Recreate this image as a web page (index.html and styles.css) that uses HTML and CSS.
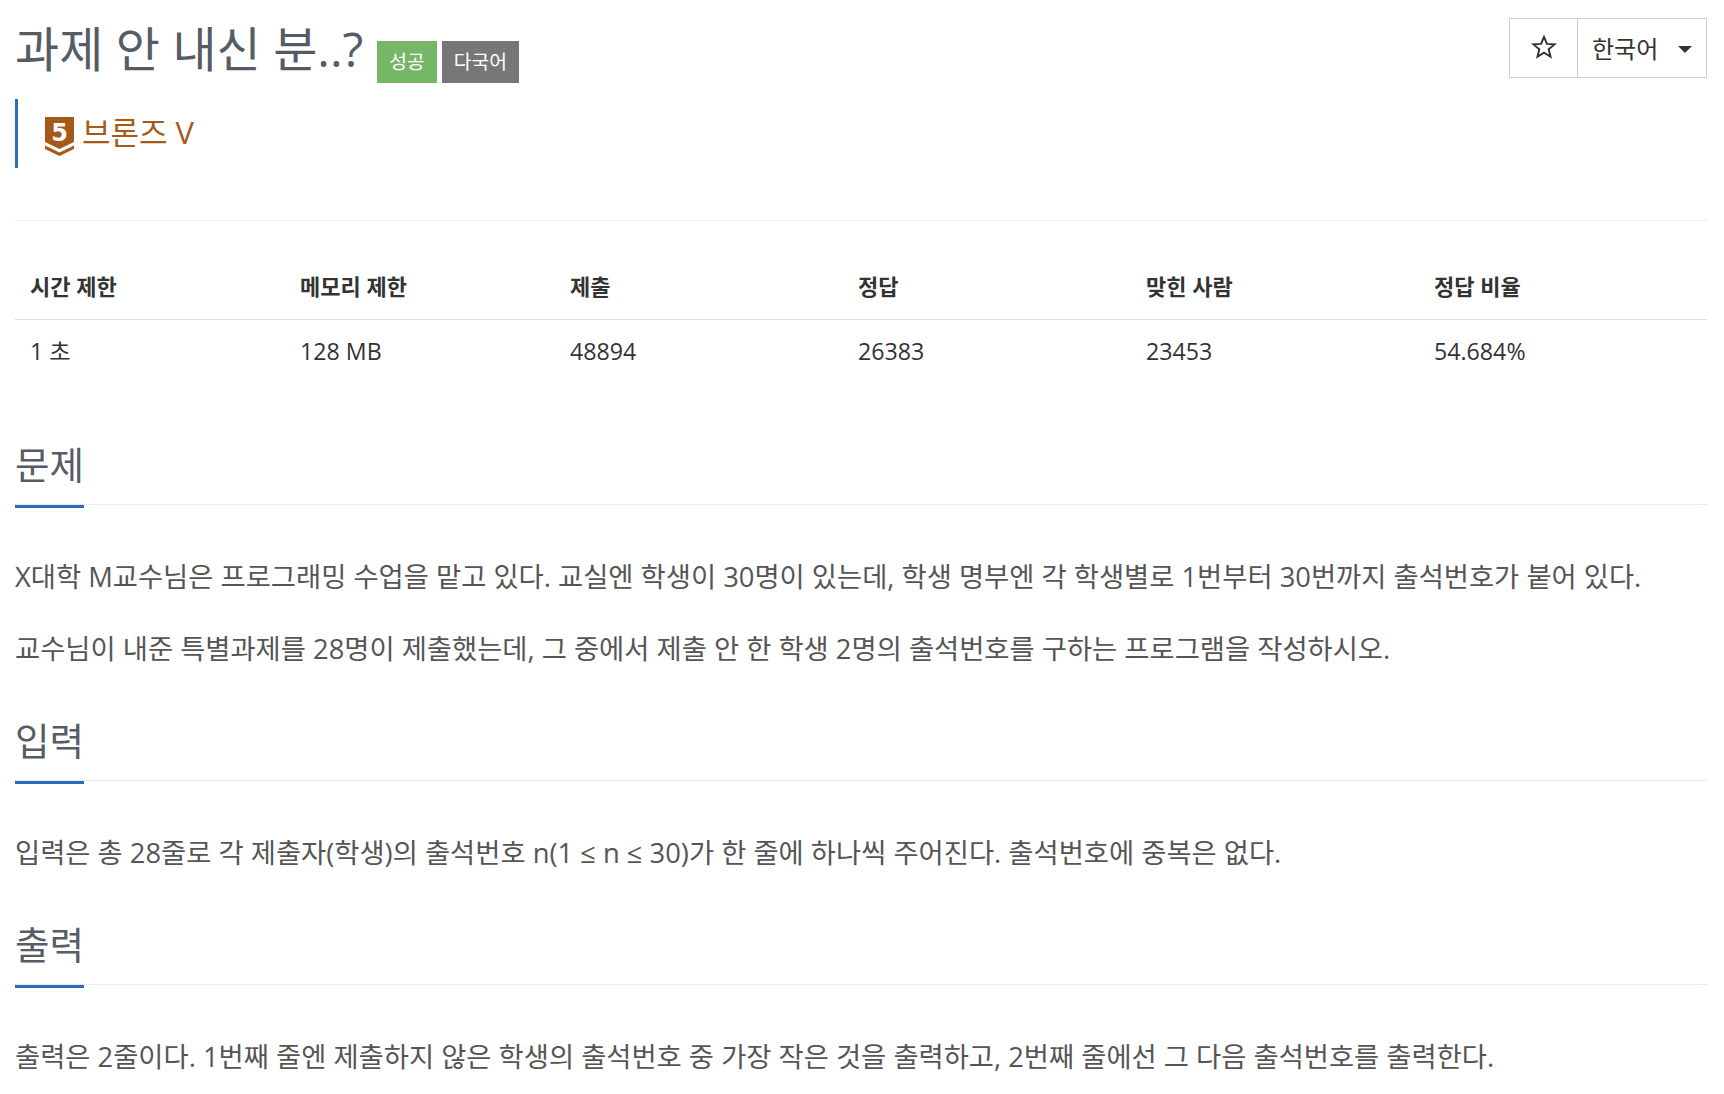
FILE: index.html
```html
<!DOCTYPE html>
<html lang="ko">
<head>
    <meta charset="UTF-8">
    <title>과제 안 내신 분..?</title>
    <link rel="stylesheet" href="styles.css">
</head>
<body>
    <div class="page-header">
        <div class="title-row">
            <h1 class="problem-title">과제 안 내신 분..?</h1>
            <span class="label label-success">성공</span>
            <span class="label label-default">다국어</span>
        </div>
        <div class="page-tools">
            <button class="tool-star" aria-label="즐겨찾기">
                <svg width="26" height="26" viewBox="0 0 24 24"><path d="M12 2.6l2.7 6.5 7 .5-5.4 4.5 1.7 6.9-6-3.7-6 3.7 1.7-6.9-5.4-4.5 7-.5z" fill="none" stroke="#333" stroke-width="1.8"/></svg>
            </button>
            <button class="tool-lang">한국어<span class="caret"></span></button>
        </div>
    </div>
    <blockquote class="tier">
        <svg class="tier-icon" width="29" height="39" viewBox="0 0 29 39">
            <path d="M0 0H29V25L14.5 32 0 25z" fill="#a65a1a"/>
            <path d="M0 28.5L14.5 35.5 29 28.5V32L14.5 39 0 32z" fill="#a65a1a"/>
            <text x="14.5" y="24" class="tier-num">5</text>
        </svg>
        <span class="tier-name">브론즈 V</span>
    </blockquote>

    <table class="info">
        <thead>
            <tr>
                <th class="col-a">시간 제한</th>
                <th class="col-a">메모리 제한</th>
                <th class="col-b">제출</th>
                <th class="col-b">정답</th>
                <th class="col-b">맞힌 사람</th>
                <th>정답 비율</th>
            </tr>
        </thead>
        <tbody>
            <tr>
                <td>1 초</td>
                <td>128 MB</td>
                <td>48894</td>
                <td>26383</td>
                <td>23453</td>
                <td>54.684%</td>
            </tr>
        </tbody>
    </table>

    <section class="problem-section">
        <div class="headline"><h2>문제</h2></div>
        <p>X대학 M교수님은 프로그래밍 수업을 맡고 있다. 교실엔 학생이 30명이 있는데, 학생 명부엔 각 학생별로 1번부터 30번까지 출석번호가 붙어 있다.</p>
        <p>교수님이 내준 특별과제를 28명이 제출했는데, 그 중에서 제출 안 한 학생 2명의 출석번호를 구하는 프로그램을 작성하시오.</p>
    </section>
    <section class="problem-section">
        <div class="headline"><h2>입력</h2></div>
        <p>입력은 총 28줄로 각 제출자(학생)의 출석번호 n(1 ≤ n ≤ 30)가 한 줄에 하나씩 주어진다. 출석번호에 중복은 없다.</p>
    </section>
    <section class="problem-section">
        <div class="headline"><h2>출력</h2></div>
        <p>출력은 2줄이다. 1번째 줄엔 제출하지 않은 학생의 출석번호 중 가장 작은 것을 출력하고, 2번째 줄에선 그 다음 출석번호를 출력한다.</p>
    </section>
</body>
</html>
```

FILE: styles.css
```css
html, body {
    overflow: hidden;
}

body {
    margin: 0;
    padding: 0 17px 0 15px;
    height: 1094px;
    box-sizing: border-box;
    background-color: #fff;
    font-family: "Open Sans", "Noto Sans CJK KR", sans-serif;
    color: #333;
}

.page-header {
    display: flex;
    justify-content: space-between;
    align-items: flex-start;
    height: 99px;
    padding-top: 18px;
    box-sizing: border-box;
}

.title-row {
    display: flex;
    align-items: flex-start;
}

.problem-title {
    margin: 0 14px 0 0;
    font-size: 48px;
    font-weight: 400;
    line-height: 62px;
    color: #555c66;
}

.label {
    height: 42px;
    margin: 23px 5px 0 0;
    padding: 0 12px;
    font-size: 19.3px;
    line-height: 42px;
    color: #fff;
}

.label-success {
    background-color: #75b766;
}

.label-default {
    background-color: #777;
}

.page-tools {
    display: flex;
    height: 60px;
    border: 1px solid #ccc;
    box-sizing: border-box;
}

.page-tools button {
    background: none;
    border: none;
    padding: 0;
    font-family: inherit;
    font-size: 24px;
    color: #333;
}

.tool-star {
    display: flex;
    align-items: center;
    justify-content: center;
    width: 68px;
    padding-bottom: 2px !important;
    border-right: 1px solid #ccc !important;
}

.tool-lang {
    display: flex;
    align-items: center;
    width: 128px;
    padding-left: 14px !important;
    padding-bottom: 2px !important;
}

.caret {
    margin-left: 20px;
    margin-top: 5px;
    border-top: 7px solid #333;
    border-left: 7px solid transparent;
    border-right: 7px solid transparent;
}

.tier {
    display: flex;
    align-items: flex-start;
    margin: 0;
    height: 69px;
    padding: 18px 0 0 27px;
    border-left: 3px solid #2a6ebb;
    box-sizing: border-box;
}

.tier-num {
    font-family: "DejaVu Sans", sans-serif;
    font-size: 24px;
    font-weight: 700;
    fill: #fff;
    text-anchor: middle;
}

.tier-name {
    margin: -7px 0 0 8px;
    font-size: 31px;
    line-height: 44px;
    color: #a65a1a;
}

.info {
    width: 100%;
    margin-top: 52px;
    margin-bottom: 55px;
    border-top: 1px solid #eee;
    border-collapse: collapse;
    table-layout: fixed;
    font-size: 23.2px;
}

.info th {
    padding: 50px 15px 18px;
    box-sizing: border-box;
    text-align: left;
    font-size: 22px;
    line-height: 30px;
    font-weight: 700;
    border-bottom: 1px solid #ddd;
}

.col-a {
    width: 270px;
}

.col-b {
    width: 288px;
}

.info td {
    padding: 11px 15px 13px;
    line-height: 40px;
}

.problem-section {
    margin-top: 45px;
}

.headline {
    height: 66px;
    margin-bottom: 21px;
    border-bottom: 1px dotted #dde;
    box-sizing: border-box;
}

.headline h2 {
    display: inline-block;
    margin: 0;
    height: 69px;
    font-size: 37.5px;
    font-weight: 400;
    line-height: 52px;
    color: #555c66;
    border-bottom: 3px solid #2a6ebb;
    box-sizing: border-box;
}

.problem-section p {
    margin: 0;
    padding-top: 30px;
    font-size: 27.35px;
    line-height: 42px;
    color: #555;
}
```
